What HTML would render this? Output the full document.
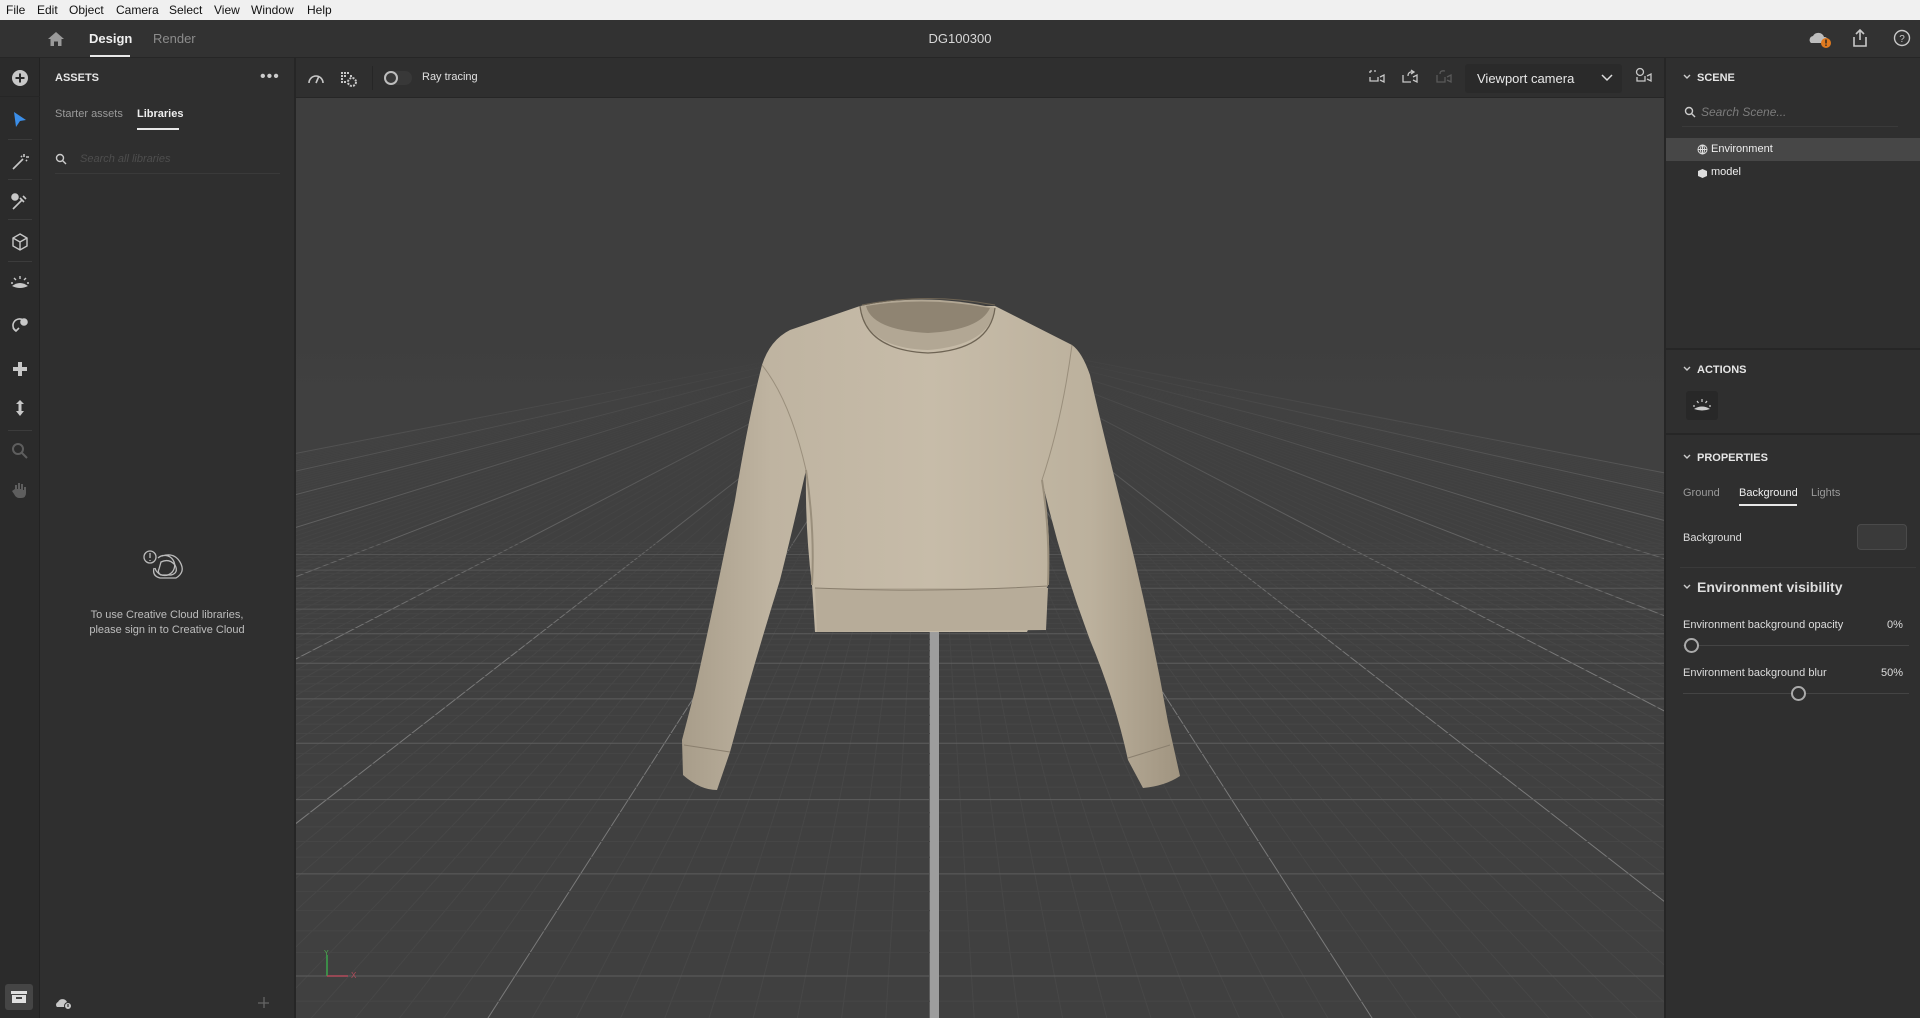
<!DOCTYPE html>
<html><head><meta charset="utf-8"><style>
*{box-sizing:border-box;margin:0;padding:0}
html,body{width:1920px;height:1018px;overflow:hidden}
body{background:#2c2c2c;font-family:"Liberation Sans",sans-serif;color:#ddd;position:relative}
.abs{position:absolute}
#menu{left:0;top:0;width:1920px;height:20px;background:#f0f0f0;color:#111;font-size:12px}
#menu span{position:absolute;top:3px}
#title{left:0;top:20px;width:1920px;height:38px;background:#323232;border-bottom:1px solid #262626}
#ltool{left:0;top:58px;width:40px;height:960px;background:#2b2b2b;border-right:1px solid #222}
#assets{left:40px;top:58px;width:256px;height:960px;background:#2f2f2f;border-right:2px solid #262626}
#vtb{left:296px;top:58px;width:1368px;height:40px;background:#2f2f2f;border-bottom:1px solid #262626}
#vp{left:296px;top:98px;width:1368px;height:920px;background:#404040;overflow:hidden}
#rp{left:1664px;top:58px;width:256px;height:960px;background:#2f2f2f;border-left:2px solid #262626;overflow:hidden}
.hdr{font-size:11px;font-weight:bold;color:#e6e6e6}
.dim{color:#9a9a9a}
.sep{position:absolute;height:1px;background:#3a3a3a}
.tb{position:absolute;left:8px;width:24px;height:1px;background:#3c3c3c}
</style></head><body>
<div id="menu" class="abs">
<span style="left:6px">File</span><span style="left:37px">Edit</span><span style="left:69px">Object</span><span style="left:116px">Camera</span><span style="left:169px">Select</span><span style="left:214px">View</span><span style="left:251px">Window</span><span style="left:307px">Help</span>
</div>
<div id="title" class="abs">
<svg class="abs" style="left:47px;top:11px" width="18" height="16" viewBox="0 0 18 16"><path d="M9 1 L17 8 H14.5 V15 H11 V10.5 H7 V15 H3.5 V8 H1 Z" fill="#9a9a9a"/></svg>
<div class="abs" style="left:89px;top:11px;font-size:13px;font-weight:bold;color:#f0f0f0">Design</div>
<div class="abs" style="left:90px;top:35px;width:40px;height:2px;background:#e8e8e8"></div>
<div class="abs" style="left:153px;top:11px;font-size:13px;color:#8c8c8c">Render</div>
<div class="abs" style="left:0;width:1920px;top:11px;text-align:center;font-size:13px;color:#d8d8d8">DG100300</div>
<svg class="abs" style="left:1808px;top:10px" width="24" height="18" viewBox="0 0 24 18"><path d="M3 13 a4 4 0 0 1 2-7 a6 6 0 0 1 11 1 a3 3 0 0 1 1 6 Z" fill="#bdbdbd"/><circle cx="18" cy="13" r="5" fill="#e07a1f"/><rect x="17.3" y="9.5" width="1.4" height="4" fill="#222"/><rect x="17.3" y="14.5" width="1.4" height="1.4" fill="#222"/></svg>
<svg class="abs" style="left:1851px;top:8px" width="18" height="20" viewBox="0 0 18 20" fill="none" stroke="#c8c8c8" stroke-width="1.6"><path d="M9 2 V12 M5 6 L9 2 L13 6 M3 9 V18 H15 V9"/></svg>
<svg class="abs" style="left:1893px;top:9px" width="18" height="18" viewBox="0 0 18 18"><circle cx="9" cy="9" r="7.5" fill="none" stroke="#c8c8c8" stroke-width="1.4"/><text x="9" y="13" font-size="10" text-anchor="middle" fill="#c8c8c8" font-family="Liberation Sans">?</text></svg>
</div>

<div id="ltool" class="abs">
<svg class="abs" style="left:10px;top:10px" width="20" height="20"><circle cx="10" cy="10" r="8" fill="#c8c8c8"/><path d="M10 5.5V14.5M5.5 10H14.5" stroke="#2b2b2b" stroke-width="2"/></svg>
<div class="tb" style="top:38px;left:0;width:40px;background:#262626"></div>
<svg class="abs" style="left:11px;top:52px" width="18" height="20"><path d="M3 2 L15 10 L9 11 L5 17 Z" fill="#3b8ee8"/></svg>
<div class="tb" style="top:81px"></div>
<svg class="abs" style="left:10px;top:94px" width="20" height="20" fill="none" stroke="#c8c8c8" stroke-width="1.6"><path d="M3 17 L13 7 M14 2v3M16 5h3M11 4l1 1M17 9l-1-1"/></svg>
<svg class="abs" style="left:10px;top:134px" width="20" height="20" fill="none" stroke="#c8c8c8" stroke-width="1.6"><circle cx="5" cy="5" r="3" fill="#c8c8c8"/><path d="M3 17 L12 8 M10 6 L14 10 M13 4 L16 7"/></svg>
<div class="tb" style="top:121px"></div>
<svg class="abs" style="left:10px;top:174px" width="20" height="20" fill="none" stroke="#c8c8c8" stroke-width="1.4"><path d="M10 2 L17 6 V14 L10 18 L3 14 V6 Z M3 6 L10 10 L17 6 M10 10 V18"/></svg>
<div class="tb" style="top:161px"></div>
<svg class="abs" style="left:9px;top:216px" width="22" height="18" fill="#c8c8c8"><path d="M3 12 Q11 6 19 12 Q11 16 3 12Z"/><path d="M11 2v3M5 4l2 2M17 4l-2 2M2 9h2M18 9h2" stroke="#c8c8c8" stroke-width="1.4"/></svg>
<div class="tb" style="top:203px"></div>
<svg class="abs" style="left:10px;top:258px" width="20" height="20" fill="none" stroke="#c8c8c8" stroke-width="1.6"><path d="M6 15 A6 6 0 1 1 13 4"/><circle cx="14" cy="6" r="3" fill="#c8c8c8"/><path d="M3 12 L6 15 L9 12"/></svg>
<svg class="abs" style="left:9px;top:300px" width="22" height="22" fill="#c8c8c8"><path d="M9 4h4v5h5v4h-5v5H9v-5H4V9h5Z"/></svg>
<svg class="abs" style="left:10px;top:340px" width="20" height="20" fill="#c8c8c8"><path d="M10 2 L14 6 H11.5 V9 H8.5 V6 H6 Z M6 13 H14 L10 18Z"/><rect x="8.5" y="9" width="3" height="4"/></svg>
<div class="tb" style="top:372px"></div>
<svg class="abs" style="left:10px;top:383px" width="20" height="20" fill="none" stroke="#5e5e5e" stroke-width="2"><circle cx="8" cy="8" r="5"/><path d="M12 12 L17 17"/></svg>
<svg class="abs" style="left:10px;top:422px" width="20" height="20" fill="#5e5e5e"><path d="M5 9 V5 h2 V9 h1 V3 h2 V9 h1 V4 h2 V10 h1 V7 h2 v6 q0 5 -5 5 h-2 q-3 0 -5 -4 l-2 -3 l1.5 -1 Z"/></svg>
<div class="abs" style="left:5px;top:926px;width:28px;height:26px;background:#454545;border-radius:3px"></div>
<svg class="abs" style="left:10px;top:932px" width="18" height="14"><rect x="1" y="1" width="16" height="3" fill="#e0e0e0"/><rect x="2" y="5" width="14" height="8" fill="#e0e0e0"/><rect x="6" y="7" width="6" height="2" fill="#454545"/></svg>
</div>

<div id="assets" class="abs">
<div class="abs hdr" style="left:15px;top:14px">ASSETS</div>
<div class="abs" style="left:220px;top:10px;font-size:16px;color:#ccc;letter-spacing:1px">•••</div>
<div class="abs dim" style="left:15px;top:50px;font-size:11px">Starter assets</div>
<div class="abs" style="left:97px;top:50px;font-size:11px;font-weight:bold;color:#eee">Libraries</div>
<div class="abs" style="left:97px;top:70px;width:42px;height:2px;background:#e8e8e8"></div>
<svg class="abs" style="left:15px;top:95px" width="12" height="12" fill="none" stroke="#ccc" stroke-width="1.4"><circle cx="5" cy="5" r="3.5"/><path d="M7.5 7.5 L11 11"/></svg>
<div class="abs" style="left:40px;top:95px;font-size:11px;font-style:italic;color:#4e4e4e">Search all libraries</div>
<div class="abs" style="left:15px;top:115px;width:225px;height:1px;background:#3a3a3a"></div>
<svg class="abs" style="left:102px;top:492px" width="52" height="36" fill="none" stroke="#bbb" stroke-width="1.3"><circle cx="8" cy="7" r="6"/><path d="M8 3v5M8 10v1"/><path d="M16 8 a10 10 0 1 1 -3 10 M20 6 q12 -4 18 6 q6 10 -4 16 h-16 q-8 -2 -6 -10"/><path d="M19 12 q8 -4 14 3 q4 8 -4 10 h-10 q-4 -2 -2 -6 z"/></svg>
<div class="abs" style="left:0;width:254px;top:550px;text-align:center;font-size:11px;line-height:15px;color:#bdbdbd">To use Creative Cloud libraries,<br>please sign in to Creative Cloud</div>
<svg class="abs" style="left:15px;top:938px" width="18" height="14"><path d="M2 11 a3 3 0 0 1 1-5 a5 5 0 0 1 9 0 a3 3 0 0 1 0 5Z" fill="#c8c8c8"/><circle cx="13" cy="10" r="3.5" fill="#c8c8c8" stroke="#2f2f2f"/><rect x="12.4" y="8" width="1.2" height="3" fill="#2f2f2f"/></svg>
<svg class="abs" style="left:217px;top:938px" width="14" height="14" stroke="#666" stroke-width="1.3"><path d="M7 1v11M1 7h11"/></svg>
</div>

<div id="vtb" class="abs">
<svg class="abs" style="left:11px;top:12px" width="18" height="16" fill="none" stroke="#c8c8c8" stroke-width="1.6"><path d="M2 13 A7 7 0 0 1 16 13"/><path d="M9 13 L12 6"/></svg>
<svg class="abs" style="left:43px;top:12px" width="20" height="18" fill="#c8c8c8"><rect x="2" y="2" width="2" height="2"/><rect x="5" y="2" width="2" height="2"/><rect x="8" y="2" width="2" height="2"/><rect x="2" y="5" width="2" height="2"/><rect x="5" y="5" width="2" height="2"/><rect x="11" y="5" width="2" height="2"/><rect x="2" y="8" width="2" height="2"/><rect x="2" y="11" width="2" height="2"/><rect x="5" y="11" width="2" height="2"/><circle cx="13" cy="12" r="4" fill="none" stroke="#c8c8c8" stroke-width="2" stroke-dasharray="2 1.2"/></svg>
<div class="abs" style="left:76px;top:8px;width:1px;height:24px;background:#262626"></div>
<div class="abs" style="left:88px;top:13px;width:28px;height:14px;border-radius:7px;background:#383838"></div>
<div class="abs" style="left:88px;top:13px;width:14px;height:14px;border-radius:7px;border:2px solid #bdbdbd"></div>
<div class="abs" style="left:126px;top:13px;font-size:11px;color:#e0e0e0">Ray tracing</div>
<svg class="abs" style="left:1071px;top:10px" width="20" height="20" fill="none" stroke="#c8c8c8" stroke-width="1.3"><path d="M3 3h2M7 3h2M3 3v2M3 9v4h8V9M13 9l4-2v7l-4-2" /></svg>
<svg class="abs" style="left:1104px;top:10px" width="20" height="20" fill="none" stroke="#c8c8c8" stroke-width="1.3"><path d="M3 7v7h8M13 9l4-2v7l-4-2M8 8 q0-5 6-4 M11 2 l3 2 -3 2"/></svg>
<svg class="abs" style="left:1138px;top:10px" width="20" height="20" fill="none" stroke="#5a5a5a" stroke-width="1.3"><path d="M3 7v7h8V9M13 9l4-2v7l-4-2M6 6 q0-4 5-3"/></svg>
<div class="abs" style="left:1169px;top:6px;width:157px;height:29px;background:#2a2a2a;border-radius:3px"></div>
<div class="abs" style="left:1181px;top:13px;font-size:13px;color:#e8e8e8">Viewport camera</div>
<svg class="abs" style="left:1305px;top:16px" width="12" height="8" fill="none" stroke="#ddd" stroke-width="1.5"><path d="M1 1l5 5 5-5"/></svg>
<svg class="abs" style="left:1338px;top:9px" width="20" height="20" fill="none" stroke="#c8c8c8" stroke-width="1.3"><circle cx="6" cy="5" r="3.5"/><path d="M3 10v4h8v-5M13 9l4-2v7l-4-2"/></svg>
</div>

<div id="vp" class="abs">
<svg id="grid" width="1368" height="920" style="position:absolute;left:0;top:0"></svg>
<div class="abs" style="left:0;top:0;width:1368px;height:920px;background:linear-gradient(#3e3e3e 0,#3e3e3e 240px,rgba(64,64,64,0.85) 300px,rgba(64,64,64,0.45) 420px,rgba(64,64,64,0) 560px)"></div>
<svg class="abs" style="left:0;top:0" width="1368" height="920" viewBox="296 98 1368 920">
<defs>
<linearGradient id="sw" x1="0" x2="1"><stop offset="0" stop-color="#a89d8a"/><stop offset="0.18" stop-color="#bfb4a1"/><stop offset="0.5" stop-color="#c7bca9"/><stop offset="0.82" stop-color="#bcb19d"/><stop offset="1" stop-color="#a09480"/></linearGradient>
</defs>
<rect x="930" y="620" width="9" height="400" fill="#9d9d9d"/>
<path d="M860 306 L790 330 Q770 340 762 365 Q748 420 735 500 Q715 600 695 690 L682 740 L683 775 Q700 790 717 790 L730 752 Q755 660 780 580 Q795 520 806 470 Q805 530 812 585 L815 632 L1027 632 L1048 585 Q1052 530 1042 480 Q1060 560 1090 640 Q1115 700 1128 760 L1143 788 Q1165 786 1180 776 L1168 722 Q1150 620 1125 520 Q1100 420 1090 375 Q1082 352 1072 345 L995 306 Z" fill="url(#sw)"/>
<path d="M806 470 Q815 530 812 585" stroke="#9a8f7c" stroke-width="2" fill="none"/>
<path d="M1042 480 Q1050 530 1048 585" stroke="#9a8f7c" stroke-width="2" fill="none"/>
<path d="M762 365 Q790 400 806 470" stroke="#8a7f6c" stroke-width="1" fill="none" opacity="0.7"/>
<path d="M1072 345 Q1062 420 1042 480" stroke="#8a7f6c" stroke-width="1" fill="none" opacity="0.7"/>
<path d="M815 588 L1048 588 L1046 630 L817 632 Z" fill="#b7ac99"/>
<path d="M815 588 Q930 593 1048 586" stroke="#8a7f6e" stroke-width="1" fill="none"/>
<path d="M684 745 L730 752 M1128 758 L1170 745" stroke="#8a7f6e" stroke-width="1"/>
<path d="M860 306 Q925 292 995 308 Q990 345 928 350 Q865 348 860 306Z" fill="#b2a794"/>
<path d="M866 306 Q926 296 990 308 Q980 330 928 333 Q872 330 866 306Z" fill="#8f8472"/>
<path d="M860 306 Q865 350 928 353 Q990 350 995 308" stroke="#6e6454" stroke-width="1.2" fill="none"/>
<path d="M862 305 Q928 292 995 305" stroke="#6e6454" stroke-width="1" fill="none"/>
</svg>
<svg class="abs" style="left:26px;top:852px" width="40" height="30"><path d="M5 5V26" stroke="#3aa64a" stroke-width="1.5"/><path d="M5 26H26" stroke="#b24a5a" stroke-width="1.5"/><text x="2" y="5" font-size="7" fill="#4caf50" font-family="Liberation Sans">Y</text><text x="29" y="28" font-size="8" fill="#b24a5a" font-family="Liberation Sans">X</text></svg>
</div>

<div id="rp" class="abs">
<svg class="abs" style="left:17px;top:16px" width="8" height="6" fill="none" stroke="#ccc" stroke-width="1.4"><path d="M1 1l3 3 3-3"/></svg>
<div class="abs hdr" style="left:31px;top:14px">SCENE</div>
<svg class="abs" style="left:18px;top:48px" width="12" height="12" fill="none" stroke="#ccc" stroke-width="1.4"><circle cx="5" cy="5" r="3.5"/><path d="M7.5 7.5 L11 11"/></svg>
<div class="abs" style="left:35px;top:47px;font-size:12px;font-style:italic;color:#7c7c7c">Search Scene...</div>
<div class="sep" style="left:16px;top:68px;width:216px"></div>
<div class="abs" style="left:0;top:80px;width:254px;height:23px;background:#474747"></div>
<svg class="abs" style="left:31px;top:86px" width="11" height="11" fill="none" stroke="#ddd" stroke-width="1"><circle cx="5.5" cy="5.5" r="4.5"/><path d="M1 5.5h9M5.5 1v9"/><ellipse cx="5.5" cy="5.5" rx="2" ry="4.5"/></svg>
<div class="abs" style="left:45px;top:85px;font-size:11px;color:#eee">Environment</div>
<svg class="abs" style="left:31px;top:110px" width="11" height="11"><path d="M5.5 1 L10 3 V8 L5.5 10 L1 8 V3Z" fill="#ddd"/></svg>
<div class="abs" style="left:45px;top:108px;font-size:11px;color:#eee">model</div>
<div class="abs" style="left:0;top:290px;width:254px;height:2px;background:#262626"></div>
<svg class="abs" style="left:17px;top:308px" width="8" height="6" fill="none" stroke="#ccc" stroke-width="1.4"><path d="M1 1l3 3 3-3"/></svg>
<div class="abs hdr" style="left:31px;top:306px">ACTIONS</div>
<div class="abs" style="left:0;top:375px;width:254px;height:2px;background:#262626"></div>
<svg class="abs" style="left:17px;top:396px" width="8" height="6" fill="none" stroke="#ccc" stroke-width="1.4"><path d="M1 1l3 3 3-3"/></svg>
<div class="abs hdr" style="left:31px;top:394px">PROPERTIES</div>
<div class="abs dim" style="left:17px;top:429px;font-size:11px">Ground</div>
<div class="abs" style="left:73px;top:429px;font-size:11px;color:#eee">Background</div>
<div class="abs" style="left:73px;top:446px;width:58px;height:2px;background:#e8e8e8"></div>
<div class="abs dim" style="left:145px;top:429px;font-size:11px">Lights</div>
<div class="abs" style="left:17px;top:474px;font-size:11px;color:#ddd">Background</div>
<div class="abs" style="left:191px;top:466px;width:50px;height:26px;border:1px solid #4a4a4a;border-radius:4px;background:#3a3a3a"></div>
<div class="sep" style="left:14px;top:509px;width:236px"></div>
<svg class="abs" style="left:17px;top:526px" width="8" height="6" fill="none" stroke="#ccc" stroke-width="1.4"><path d="M1 1l3 3 3-3"/></svg>
<div class="abs" style="left:31px;top:521px;font-size:14px;font-weight:bold;color:#ddd">Environment visibility</div>
<div class="abs" style="left:17px;top:561px;font-size:11px;color:#ddd">Environment background opacity</div>
<div class="abs" style="left:221px;top:561px;font-size:11px;color:#ddd">0%</div>
<div class="abs" style="left:17px;top:587px;width:226px;height:1px;background:#444"></div>
<div class="abs" style="left:18px;top:580px;width:15px;height:15px;border-radius:50%;border:2px solid #aaa;background:#2f2f2f"></div>
<div class="abs" style="left:17px;top:609px;font-size:11px;color:#ddd">Environment background blur</div>
<div class="abs" style="left:215px;top:609px;font-size:11px;color:#ddd">50%</div>
<div class="abs" style="left:17px;top:635px;width:226px;height:1px;background:#444"></div>
<div class="abs" style="left:125px;top:628px;width:15px;height:15px;border-radius:50%;border:2px solid #aaa;background:#2f2f2f"></div>
</div>
<svg class="abs" style="left:1686px;top:391px" width="32" height="29"><rect width="32" height="29" rx="3" fill="#282828"/><path d="M8 18 Q16 13 24 18 Q16 21 8 18Z" fill="#ccc"/><path d="M16 8v3M11 10l1.5 2M21 10l-1.5 2M7 15h2M23 15h2" stroke="#ccc" stroke-width="1.2"/></svg>
<script>
(function(){
var s=document.getElementById('grid'),h='';
var vx=930-296,vy=330-98,by=1018-98;
for(var k=-80;k<=80;k++){
 var xb=vx+44.2*k; var maj=(k%10===0);
 var x2=vx+(xb-vx)*2,y2=vy+(by-vy)*2;
 h+='<line x1="'+vx+'" y1="'+vy+'" x2="'+x2+'" y2="'+y2+'" stroke="'+(maj?'#7a7a7a':'#474747')+'" stroke-width="1"/>';
}
for(var i=0;i<60;i++){
 var z=0.865+0.04*i;
 var y=vy+688/z; var maj=(i%5===0);
 if(y>925)continue;
 h+='<line x1="0" y1="'+y.toFixed(1)+'" x2="1368" y2="'+y.toFixed(1)+'" stroke="'+(maj?'#5e5e5e':'#464646')+'" stroke-width="1"/>';
}
s.innerHTML=h;
})();
</script>
</body></html>
